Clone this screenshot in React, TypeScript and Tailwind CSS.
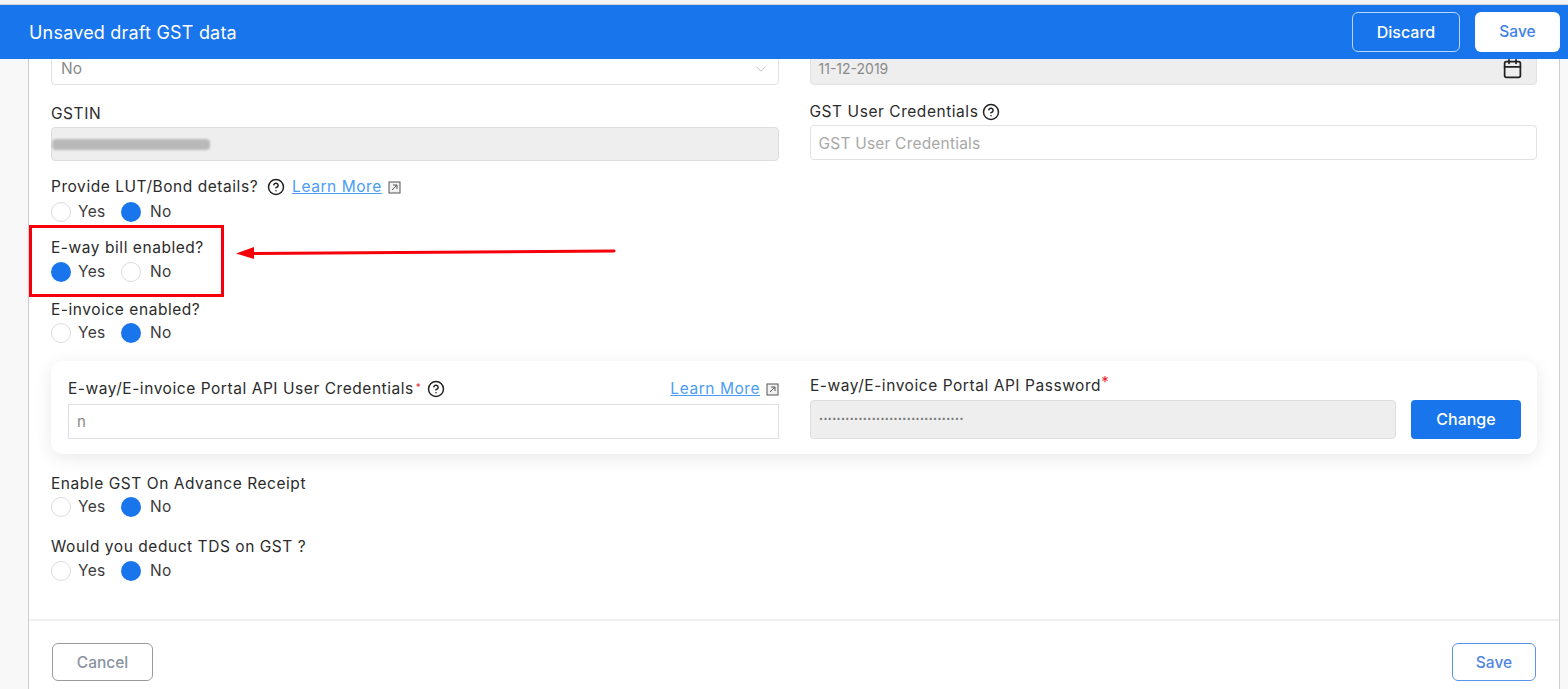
import { Calendar, ChevronDown, CircleHelp } from "lucide-react";

function Radios({ value }: { value: "Yes" | "No" }) {
    return (
        <div className="flex h-5 flex-row items-center text-[15.5px] tracking-[0.3px] text-[#3a3a3a]">
            <span className={value === "Yes" ? "size-5 rounded-full bg-[#1975eb]" : "size-5 rounded-full border border-[#dcdcdc] bg-white"} />
            <span className="ml-[7px] w-[43px]">Yes</span>
            <span className={value === "No" ? "size-5 rounded-full bg-[#1975eb]" : "size-5 rounded-full border border-[#dcdcdc] bg-white"} />
            <span className="ml-[9px]">No</span>
        </div>
    );
}

function Label({ children }: { children: React.ReactNode }) {
    return <div className="flex h-5 flex-row items-center text-[15.5px] tracking-[0.55px] text-[#2b2b2b]">{children}</div>;
}

function OutLink() {
    return (
        <svg width="13" height="13" viewBox="0 0 13 13" fill="#f1f1f1" stroke="#555" strokeWidth="1">
            <rect x="1" y="1" width="11" height="11" />
            <path d="M4 9 L9 4 M5 4 H9 V8" fill="none" />
        </svg>
    );
}

export default function App() {
    return (
        <div className="relative h-[689px] w-[1568px] overflow-hidden bg-[#f8f8f8] font-['Inter',sans-serif]">
            <div className="h-[5px] border-b border-[#d4d4d4] bg-[#f4f4f4]" />
            <div className="relative z-10 flex h-[54px] flex-row items-center justify-between bg-[#1975eb] pl-[29px] pr-2">
                <h4 className="text-[18px] tracking-[0.2px] text-white">Unsaved draft GST data</h4>
                <div className="flex flex-row items-center gap-[15px]">
                    <button className="h-10 w-[108px] rounded-md border border-[#b9d5fa] text-[16px] font-medium text-white">Discard</button>
                    <button className="h-10 w-[85px] rounded-md bg-white text-[15.5px] font-medium text-[#3d7fe8]">Save</button>
                </div>
            </div>

            <div className="ml-[28px] -mt-2 h-[638px] w-[1532px] border-x border-[#cfcfcf] bg-white">
                <div className="px-[22px]">
                    <div className="grid grid-cols-2 gap-x-[31px]">
                        <div className="flex flex-col">
                            <div className="flex h-[34px] flex-row items-center justify-between rounded border border-[#e2e2e2] pl-[9px] pr-2 pt-[2px] text-[15.5px] text-[#8a8a8a]">
                                No
                                <ChevronDown size={18} strokeWidth={1.25} className="text-[#bdbdbd]" />
                            </div>
                            <div className="mt-[19px]"><Label>GSTIN</Label></div>
                            <div className="mt-[3px] flex h-[34px] items-center rounded border border-[#dedede] bg-[#eeeeee]">
                                <div className="h-[11px] w-[158px] rounded-sm bg-[#b9b9b9] blur-[1px]" />
                            </div>
                        </div>
                        <div className="flex flex-col">
                            <div className="flex h-[34px] flex-row items-center justify-between rounded border border-[#e2e2e2] bg-[#eeeeee] pl-2 pr-[13px] text-[14px] text-[#8a8a8a]">
                                11-12-2019
                                <Calendar size={21} strokeWidth={2} className="text-[#222]" />
                            </div>
                            <div className="mt-4 pt-[1px]">
                                <Label>
                                    GST User Credentials
                                    <CircleHelp size={18} strokeWidth={2} className="ml-[4px] text-[#222]" />
                                </Label>
                            </div>
                            <div className="mt-[3px] flex h-[35px] items-center rounded border border-[#e2e2e2] px-2 pt-[2px] text-[15.5px] tracking-[0.2px] text-[#a8a8a8]">GST User Credentials</div>
                        </div>
                    </div>

                    <div className="mt-4">
                        <Label>
                            Provide LUT/Bond details?
                            <CircleHelp size={18} strokeWidth={2} className="ml-[9px] text-[#222]" />
                            <span className="ml-[7px] text-[#4a9df5] underline">Learn More</span>
                            <span className="ml-[6px]"><OutLink /></span>
                        </Label>
                    </div>
                    <div className="mt-[5px]"><Radios value="No" /></div>

                    <div className="mt-4"><Label>E-way bill enabled?</Label></div>
                    <div className="mt-1"><Radios value="Yes" /></div>

                    <div className="mt-[18px]"><Label>E-invoice enabled?</Label></div>
                    <div className="mt-[3px]"><Radios value="No" /></div>

                    <div className="mt-[18px] grid h-[93px] grid-cols-[711px_1fr] gap-x-[31px] rounded-xl bg-white pl-[17px] pr-[16px] pt-[15px] shadow-[0_4px_18px_rgba(0,0,0,0.09)]">
                        <div className="flex flex-col">
                            <div className="flex h-[24px] flex-row items-center justify-between pt-[2px]">
                                <Label>
                                    E-way/E-invoice Portal API User Credentials
                                    <span className="mb-1 ml-[2px] text-[10px] text-[#e5333f]">*</span>
                                    <CircleHelp size={18} strokeWidth={2} className="ml-[6px] text-[#222]" />
                                </Label>
                                <div className="flex flex-row items-center text-[15.5px] tracking-[0.55px]">
                                    <span className="text-[#4a9df5] underline">Learn More</span>
                                    <span className="ml-[6px]"><OutLink /></span>
                                </div>
                            </div>
                            <div className="mt-[4px] flex h-[35px] items-center border border-[#dedee6] px-2 pt-[2px] text-[15px] text-[#8a8a8a]">n</div>
                        </div>
                        <div className="flex flex-col">
                            <Label>
                                E-way/E-invoice Portal API Password
                                <span className="mb-2 text-[15px] text-[#f01f2f]">*</span>
                            </Label>
                            <div className="mt-[4px] flex flex-row gap-[15px]">
                                <div className="flex h-[39px] flex-1 items-center rounded border border-[#dedee2] bg-[#eeeeee] px-2 text-[7px] tracking-[0.45px] text-[#777]">
                                    {"•".repeat(33)}
                                </div>
                                <button className="h-[39px] w-[110px] rounded bg-[#1975eb] pb-[2px] text-[16px] font-medium text-white">Change</button>
                            </div>
                        </div>
                    </div>

                    <div className="mt-5"><Label>Enable GST On Advance Receipt</Label></div>
                    <div className="mt-[3px]"><Radios value="No" /></div>

                    <div className="mt-5"><Label>Would you deduct TDS on GST ?</Label></div>
                    <div className="mt-1"><Radios value="No" /></div>
                </div>

                <div className="mt-[38px] h-[2px] bg-[#efefef]" />

                <div className="mt-[22px] flex flex-row items-center justify-between pl-[23px] pr-[23px]">
                    <button className="h-[38px] w-[101px] rounded-md border border-[#9a9a9a] pt-[2px] text-[15.5px] font-medium text-[#8a939e]">Cancel</button>
                    <button className="h-[38px] w-[84px] rounded-md border border-[#5b93ea] pt-[2px] text-[15.5px] font-medium text-[#4f86e0]">Save</button>
                </div>
            </div>

            {/* annotation drawn on top of the screenshot */}
            <div className="absolute left-[29px] top-[225px] z-20 h-[72px] w-[195px] border-[3px] border-[#f5000a]" />
            <svg className="absolute left-[230px] top-[240px] z-20" width="390" height="24" viewBox="0 0 390 24" fill="none">
                <path d="M6 13.5 L24 7 L24 19 Z" fill="#f5000a" />
                <path d="M20 13.5 L384 11" stroke="#f5000a" strokeWidth="3" strokeLinecap="round" />
            </svg>
        </div>
    );
}
